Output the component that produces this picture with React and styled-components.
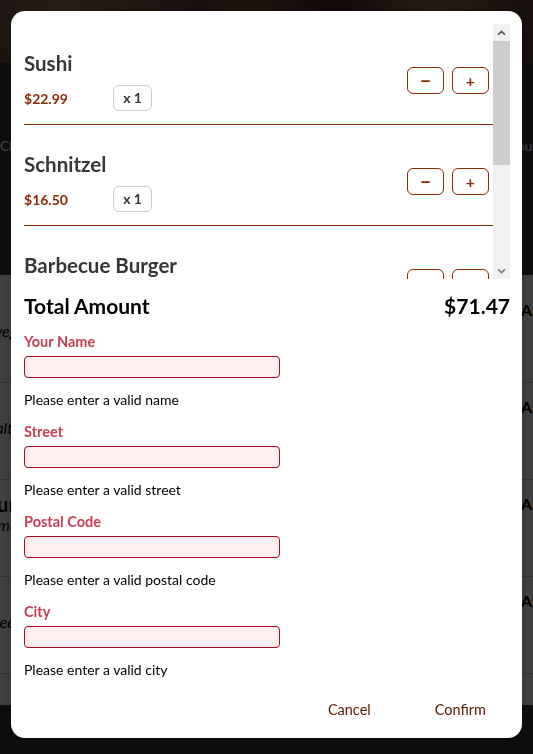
import React from 'react';
import styled, { createGlobalStyle } from 'styled-components';

const GlobalStyle = createGlobalStyle`
  * { box-sizing: border-box; }
  html, body { margin: 0; padding: 0; }
  body {
    background: #383838;
    font-family: Lato, "Noto Sans", sans-serif;
    overflow: hidden;
    height: 754px;
  }
`;

/* ---------- page behind the modal ---------- */

const Page = styled.div`
  width: 533px;
  height: 754px;
  overflow: hidden;
`;

const Hero = styled.div`
  height: 63px;
  background:
    radial-gradient(circle at 12% 40%, #a87c64 0, transparent 22%),
    radial-gradient(circle at 48% 70%, #8c604a 0, transparent 25%),
    radial-gradient(circle at 82% 30%, #9e7058 0, transparent 20%),
    linear-gradient(90deg, #583c30, #725040 30%, #4e3226 60%, #664438);
`;

const Intro = styled.section`
  height: 212px;
  padding-top: 73px;
`;

const IntroLine = styled.p`
  margin: 0;
  white-space: nowrap;
  color: #fff;
  font-size: 13.5px;
  line-height: 20px;
`;

const MealsCard = styled.ul`
  list-style: none;
  margin: 0 0 0 -105px;
  width: 638px;
  padding: 11px 0 31px;
  background: #fff;
`;

const MealRow = styled.li`
  display: flex;
  justify-content: space-between;
  height: 97px;
  padding-top: 13px;
  border-bottom: 1px solid #ccc;
`;

const MealName = styled.h3`
  margin: 0;
  font-size: 20px;
  line-height: 22px;
  white-space: nowrap;
`;

const MealDesc = styled.div`
  font-style: italic;
  font-size: 16px;
  line-height: 20px;
  white-space: nowrap;
`;

const MealPrice = styled.div`
  margin-top: 4px;
  font-weight: 700;
  color: #ad5502;
  font-size: 18px;
`;

const MealForm = styled.div`
  flex: 0 0 12px;
  min-width: 0;
  padding-top: 1px;
  font-weight: 700;
  font-size: 16px;
  line-height: 20px;
  white-space: nowrap;
`;

const Backdrop = styled.div`
  position: fixed;
  inset: 0;
  background: rgba(0, 0, 0, 0.75);
  z-index: 20;
`;

/* ---------- cart modal ---------- */

const Modal = styled.div`
  position: fixed;
  top: 11px;
  left: 11px;
  width: 511px;
  background: #fff;
  border-radius: 14px;
  padding: 13px 12px 10px 13px;
  box-shadow: 0 2px 8px rgba(0, 0, 0, 0.25);
  z-index: 30;
`;

const CartBox = styled.div`
  display: flex;
  height: 255px;
`;

const ItemsPane = styled.ul`
  flex: 1;
  margin: 0;
  padding: 0;
  list-style: none;
  overflow: hidden;
`;

const ScrollTrack = styled.div`
  width: 17px;
  display: flex;
  flex-direction: column;
  background: #f1f1f1;
`;

const ScrollArrow = styled.div`
  height: 17px;
  display: flex;
  align-items: center;
  justify-content: center;
  color: ${p => p.$color};
`;

const Thumb = styled.div`
  height: 124px;
  background: #cdcdcd;
`;

const Spacer = styled.div`
  flex: 1;
`;

const CartItem = styled.li`
  display: flex;
  justify-content: space-between;
  align-items: center;
  padding: 26px 0 13px;
  border-bottom: 1px solid #8a2b06;
`;

const ItemTitle = styled.h2`
  margin: 0 0 9px;
  font-size: 20.5px;
  line-height: 26px;
  font-weight: 700;
  color: #363636;
`;

const ItemSummary = styled.div`
  width: 128px;
  height: 26px;
  display: flex;
  justify-content: space-between;
  align-items: center;
`;

const ItemPrice = styled.span`
  font-weight: 700;
  font-size: 14px;
  color: #8a2b06;
`;

const ItemAmount = styled.span`
  height: 26px;
  padding: 0 9px;
  border: 1px solid #ccc;
  border-radius: 6px;
  font-weight: 700;
  font-size: 14px;
  line-height: 24px;
  color: #363636;
`;

const ItemActions = styled.div`
  display: flex;
`;

const StepButton = styled.button`
  width: 37px;
  height: 27px;
  margin: 0 4px;
  padding: 0;
  display: flex;
  align-items: center;
  justify-content: center;
  border: 1px solid #8a2b06;
  border-radius: 6px;
  background: transparent;
  color: #8a2b06;
  font-family: inherit;
  font-weight: 700;
  font-size: ${p => (p.$wide ? '19px' : '16px')};
`;

const Total = styled.div`
  display: flex;
  justify-content: space-between;
  align-items: center;
  margin-top: 13px;
  font-weight: 700;
  font-size: 21px;
  line-height: 28px;
  color: #000;
`;

const CheckoutForm = styled.form`
  margin-top: 12px;
  display: flex;
  flex-direction: column;
  gap: 12px;
`;

const Label = styled.label`
  display: block;
  margin-bottom: 4px;
  font-weight: 700;
  font-size: 14.5px;
  line-height: 20px;
  color: #ca3e51;
`;

const Input = styled.input`
  display: block;
  width: 256px;
  height: 22px;
  margin: 0;
  border: 1px solid #aa0b20;
  border-radius: 4px;
  background: #ffeff1;
  font: inherit;
`;

const ErrorText = styled.p`
  margin: 12px 0 0;
  font-size: 14px;
  line-height: 20px;
  color: #000;
`;

const FormActions = styled.div`
  display: flex;
  justify-content: flex-end;
`;

const TextButton = styled.button`
  margin-left: 16px;
  padding: 8px 24px;
  border: none;
  background: transparent;
  font-family: inherit;
  font-size: 14.5px;
  line-height: 20px;
  color: #5a1a01;
`;

const meals = [
  { name: 'Sushi', desc: 'Finest fish and veggies', price: 22.99 },
  { name: 'Schnitzel', desc: 'A german specialty!', price: 16.5 },
  { name: 'Barbecue Burger', desc: 'American, raw, meaty', price: 12.99 },
  { name: 'Green Bowl', desc: 'Healthy...and green...', price: 18.99 },
];

const fields = [
  { id: 'name', label: 'Your Name', error: 'Please enter a valid name' },
  { id: 'street', label: 'Street', error: 'Please enter a valid street' },
  { id: 'postal', label: 'Postal Code', error: 'Please enter a valid postal code' },
  { id: 'city', label: 'City', error: 'Please enter a valid city' },
];

const Chevron = ({ down }) => (
  <svg width="9" height="6" viewBox="0 0 9 6" fill="none">
    <polyline
      points={down ? '1,1.2 4.5,4.6 8,1.2' : '1,4.8 4.5,1.4 8,4.8'}
      stroke="currentColor"
      strokeWidth="1.6"
    />
  </svg>
);

const total = meals.reduce((sum, m) => sum + m.price, 0);

export default function App() {
  return (
    <>
      <GlobalStyle />
      <Page>
        <Hero />
        <Intro>
          <IntroLine>
            Choose your favorite meal from our broad selection of available meals and enjoy a delicious lunch or dinner at home.
          </IntroLine>
        </Intro>
        <MealsCard>
          {meals.map(m => (
            <MealRow key={m.name}>
              <div>
                <MealName>{m.name}</MealName>
                <MealDesc>{m.desc}</MealDesc>
                <MealPrice>${m.price.toFixed(2)}</MealPrice>
              </div>
              <MealForm>Amount</MealForm>
            </MealRow>
          ))}
        </MealsCard>
      </Page>
      <Backdrop />
      <Modal>
        <CartBox>
          <ItemsPane>
            {meals.map(m => (
              <CartItem key={m.name}>
                <div>
                  <ItemTitle>{m.name}</ItemTitle>
                  <ItemSummary>
                    <ItemPrice>${m.price.toFixed(2)}</ItemPrice>
                    <ItemAmount>x 1</ItemAmount>
                  </ItemSummary>
                </div>
                <ItemActions>
                  <StepButton $wide>−</StepButton>
                  <StepButton>+</StepButton>
                </ItemActions>
              </CartItem>
            ))}
          </ItemsPane>
          <ScrollTrack>
            <ScrollArrow $color="#505050"><Chevron /></ScrollArrow>
            <Thumb />
            <Spacer />
            <ScrollArrow $color="#7a7a7a"><Chevron down /></ScrollArrow>
          </ScrollTrack>
        </CartBox>
        <Total>
          <span>Total Amount</span>
          <span>${total.toFixed(2)}</span>
        </Total>
        <CheckoutForm>
          {fields.map(f => (
            <div key={f.id}>
              <Label htmlFor={f.id}>{f.label}</Label>
              <Input id={f.id} type="text" />
              <ErrorText>{f.error}</ErrorText>
            </div>
          ))}
          <FormActions>
            <TextButton type="button">Cancel</TextButton>
            <TextButton type="button">Confirm</TextButton>
          </FormActions>
        </CheckoutForm>
      </Modal>
    </>
  );
}
